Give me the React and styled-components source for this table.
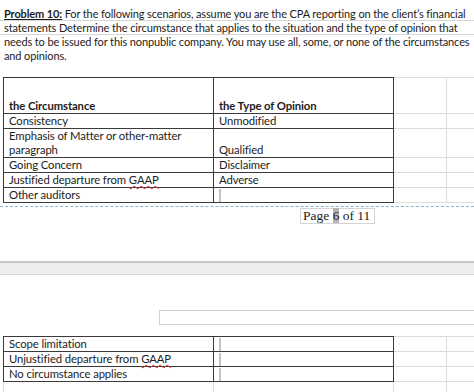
import React from "react";
import styled, { createGlobalStyle } from "styled-components";

const GlobalStyle = createGlobalStyle`
  html, body { margin: 0; padding: 0; background: #fff; }
  body { font-family: Lato, "Open Sans", sans-serif; color: #1c1c1c; }
`;

const Screen = styled.div`
  width: 474px;
  height: 392px;
  overflow: hidden;
  background: #fff;
`;

const PageTop = styled.div`
  height: 206px;
  overflow: hidden;
`;

const Intro = styled.div`
  padding-top: 7px;
  font-size: 11px;
  letter-spacing: -0.12px;
  line-height: 13px;
`;

const IntroLine = styled.div`
  padding-left: 4px;
  white-space: nowrap;
  border-bottom: 1px solid ${(p) => (p.$ruled ? "#d6d6d6" : "transparent")};
`;

const Label = styled.span`
  font-weight: 700;
  text-decoration: underline;
`;

const Grid = styled.table`
  border-collapse: collapse;
  table-layout: fixed;
  margin: ${(p) => p.$top}px 0 0 3px;
  width: 500px;
`;

const Cell = styled.td`
  border: 1px solid ${(p) => (p.$faint ? "#dcdcdc" : "#3a3a3a")};
  padding: 0 0 0 5px;
  height: ${(p) => p.$h || 14}px;
  vertical-align: bottom;
  font-size: 11.3px;
  letter-spacing: -0.1px;
  line-height: 14px;
  font-weight: ${(p) => (p.$head ? 700 : 400)};
  white-space: nowrap;
`;

const FillCell = styled.td`
  border-left: 1px solid #dcdcdc;
  border-right: 1px solid #dcdcdc;
  height: 40px;
`;

const Caret = styled.span`
  display: inline-block;
  width: 2px;
  height: 13px;
  background: #c4c4c4;
  vertical-align: bottom;
`;

const Typo = styled.span`
  text-decoration: underline wavy #d33;
  text-decoration-thickness: 1px;
  text-underline-offset: 1px;
`;

const PageFooter = styled.div`
  height: 53px;
  border-top: 1px dashed #8db3c4;
  padding: 1px 0 0 300px;
  display: flex;
  align-items: flex-start;
`;

const PageTag = styled.span`
  border: 1px solid #d4d4d4;
  font-family: "Liberation Serif", serif;
  font-size: 13.5px;
  line-height: 14px;
  padding: 0 4px 0 2px;
  color: #222;
`;

const Field = styled.span`
  background: #b4b4b4;
`;

const PageGap = styled.div`
  height: 11px;
  background: #eeeeee;
  border-top: 2px solid #c6c6c6;
  border-bottom: 1px solid #d8d8d8;
`;

const PageBottom = styled.div`
  padding-top: 35px;
`;

const TextBox = styled.div`
  height: 13px;
  margin-left: 159px;
  margin-right: -4px;
  border: 1px solid #d0d0d0;
`;

const Cols = () => (
  <colgroup>
    <col style={{ width: 210 }} />
    <col style={{ width: 180 }} />
    <col style={{ width: 53 }} />
    <col style={{ width: 57 }} />
  </colgroup>
);

const Row = ({ left, right, h, head }) => (
  <tr>
    <Cell $h={h} $head={head}>{left}</Cell>
    <Cell $h={h} $head={head}>{right}</Cell>
    <Cell $faint $h={h} />
    <Cell $faint $h={h} />
  </tr>
);

const App = () => {
  return (
    <Screen>
      <GlobalStyle />
      <PageTop>
        <Intro>
          <IntroLine $ruled>
            <Label>Problem 10:</Label> For the following scenarios, assume you are the CPA reporting on the client’s financial
          </IntroLine>
          <IntroLine $ruled>
            statements Determine the circumstance that applies to the situation and the type of opinion that
          </IntroLine>
          <IntroLine>
            needs to be issued for this nonpublic company. You may use all, some, or none of the circumstances
          </IntroLine>
          <IntroLine>and opinions.</IntroLine>
        </Intro>
        <Grid $top={14}>
          <Cols />
          <tbody>
            <Row head h={35} left="the Circumstance" right="the Type of Opinion" />
            <Row left="Consistency" right="Unmodified" />
            <Row
              h={28}
              left={<>Emphasis of Matter or other-matter<br />paragraph</>}
              right="Qualified"
            />
            <Row left="Going Concern" right="Disclaimer" />
            <Row left={<>Justified departure from <Typo>GAAP</Typo></>} right="Adverse" />
            <Row left="Other auditors" right={<Caret />} />
          </tbody>
        </Grid>
      </PageTop>
      <PageFooter>
        <PageTag>
          Page <Field>6</Field> of 11
        </PageTag>
      </PageFooter>
      <PageGap />
      <PageBottom>
        <TextBox />
        <Grid $top={11}>
          <Cols />
          <tbody>
            <Row left="Scope limitation" right={<Caret />} />
            <Row left={<>Unjustified departure from <Typo>GAAP</Typo></>} right={<Caret />} />
            <Row left="No circumstance applies" right={<Caret />} />
            <tr>
              <FillCell />
              <FillCell />
              <FillCell />
              <FillCell />
            </tr>
          </tbody>
        </Grid>
      </PageBottom>
    </Screen>
  );
};

export default App;
